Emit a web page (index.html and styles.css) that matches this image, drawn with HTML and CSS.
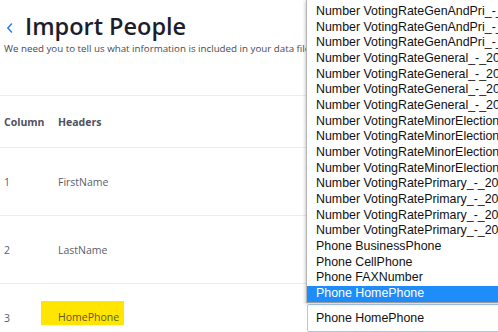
FILE: index.html
```html
<!DOCTYPE html>
<html>
<head>
<meta charset="utf-8">
<link rel="stylesheet" href="styles.css">
</head>
<body>
<div class="page">
  <header class="head">
    <div class="title-row">
      <svg class="back" width="7" height="10" viewBox="0 0 7 10"><path d="M5.5 1 L1.8 5 L5.5 9" fill="none" stroke="#2f80f0" stroke-width="1.6" stroke-linecap="round" stroke-linejoin="round"/></svg>
      <h1 class="title">Import People</h1>
    </div>
    <p class="sub">We need you to tell us what information is included in your data file so that we can import it correctly.</p>
  </header>
  <div class="table">
    <div class="row row-head">
      <div class="c1">Column</div>
      <div class="c2">Headers</div>
      <div class="c3"></div>
    </div>
    <div class="row">
      <div class="c1">1</div>
      <div class="c2">FirstName</div>
      <div class="c3"></div>
    </div>
    <div class="row">
      <div class="c1">2</div>
      <div class="c2">LastName</div>
      <div class="c3"></div>
    </div>
    <div class="row">
      <div class="c1">3</div>
      <div class="c2"><span class="mark">HomePhone</span></div>
      <div class="c3">
        <div class="select-wrap">
          <div class="popup">
            <div class="opt">Number VotingRateGenAndPri_-_2016</div>
            <div class="opt">Number VotingRateGenAndPri_-_2018</div>
            <div class="opt">Number VotingRateGenAndPri_-_2020</div>
            <div class="opt">Number VotingRateGeneral_-_2014</div>
            <div class="opt">Number VotingRateGeneral_-_2016</div>
            <div class="opt">Number VotingRateGeneral_-_2018</div>
            <div class="opt">Number VotingRateGeneral_-_2020</div>
            <div class="opt">Number VotingRateMinorElection_-_2014</div>
            <div class="opt">Number VotingRateMinorElection_-_2016</div>
            <div class="opt">Number VotingRateMinorElection_-_2018</div>
            <div class="opt">Number VotingRateMinorElection_-_2020</div>
            <div class="opt">Number VotingRatePrimary_-_2014</div>
            <div class="opt">Number VotingRatePrimary_-_2016</div>
            <div class="opt">Number VotingRatePrimary_-_2018</div>
            <div class="opt">Number VotingRatePrimary_-_2020</div>
            <div class="opt">Phone BusinessPhone</div>
            <div class="opt">Phone CellPhone</div>
            <div class="opt">Phone FAXNumber</div>
            <div class="opt opt-sel">Phone HomePhone</div>
          </div>
          <div class="select">Phone HomePhone</div>
        </div>
      </div>
    </div>
  </div>
</div>
</body>
</html>
```

FILE: styles.css
```css
html, body {
  margin: 0;
  padding: 0;
  background: #fff;
  overflow: hidden;
}
.page {
  width: 700px;
  font-family: "Open Sans", Lato, sans-serif;
  color: #5a5e6b;
}
.head {
  height: 95px;
  padding: 12px 0 0 0;
  box-sizing: border-box;
}
.title-row {
  display: flex;
  align-items: center;
  height: 28px;
  padding-left: 6px;
  gap: 12px;
}
.back {
  display: block;
  margin-top: 3px;
}
.title {
  margin: 0;
  font-size: 23.5px;
  font-weight: 600;
  color: #1d1d2c;
  line-height: 28px;
}
.sub {
  margin: 3px 0 0 4px;
  font-size: 9.75px;
  line-height: 12px;
  color: #4a4a4f;
  white-space: nowrap;
}
.table {
  border-top: 1px solid #ececec;
}
.row {
  display: grid;
  grid-template-columns: 53px 250px 220px;
  padding-left: 4px;
  align-items: center;
  height: 67px;
  border-bottom: 1px solid #ececec;
  font-size: 10.5px;
}
.row-head {
  height: 51px;
  font-weight: 700;
  color: #4e5260;
}
.c2 {
  padding-left: 1px;
  display: flex;
  align-items: center;
}
.mark {
  display: block;
  background: #ffe500;
  color: #5b5a2c;
  margin-left: -17px;
  margin-top: -10px;
  padding: 10px 5px 1px 17px;
  line-height: 13px;
}
.select-wrap {
  position: relative;
}
.select {
  height: 28px;
  box-sizing: border-box;
  border: 1px solid #a8c9ef;
  border-radius: 2px;
  background: #fff;
  font-family: "Liberation Sans", Arial, sans-serif;
  font-size: 12.4px;
  color: #111;
  line-height: 26px;
  padding-left: 8px;
}
.popup {
  position: absolute;
  left: -1px;
  bottom: calc(100% + 1px);
  width: 230px;
  padding-top: 4px;
  background: #fff;
  border-left: 1px solid #b5b5b5;
  border-bottom: 1px solid #9a9a9a;
  box-shadow: -1px 1px 3px rgba(0,0,0,0.2);
  font-family: "Liberation Sans", Arial, sans-serif;
  font-size: 12.4px;
  color: #111;
}
.opt {
  height: 15.67px;
  line-height: 15.67px;
  padding-left: 9px;
  white-space: nowrap;
}
.opt-sel {
  background: #1e8cf9;
  color: #fff;
}
```
